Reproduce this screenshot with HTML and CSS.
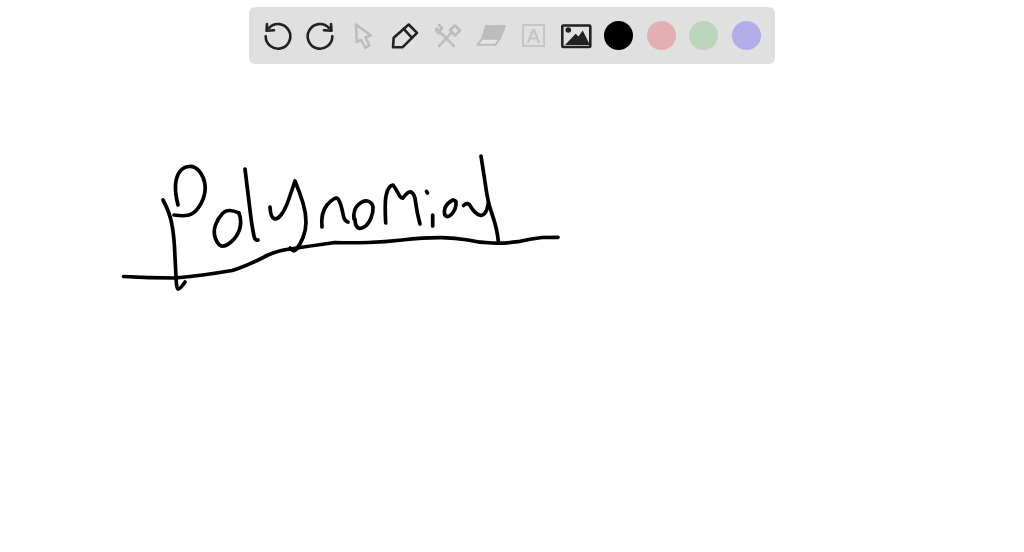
FILE: index.html
```html
<!DOCTYPE html>
<html lang="en">
<head>
<meta charset="utf-8">
<title>Whiteboard</title>
<link rel="stylesheet" href="styles.css">
</head>
<body>
<main class="board">
  <svg class="ink" viewBox="0 0 1024 552" role="img" aria-label="Handwritten word: Polynomial">
    <path d="M163 200Q170 213 172 225Q174.3 237 175 257Q176 277 176.3 282Q176.7 288 178 289Q180 289.5 185 282"/>
    <path d="M178 205Q175 193 175.5 185Q176 177 179.5 172Q183 167 189 166.5Q195 166 199.5 171.5Q204 177 205 185Q206 193 202 201.5Q198 210 192.5 213.5Q187 217 174 215"/>
    <path d="M239 213Q228 208 223 213Q218 218 215.5 225Q213 232 215.5 238.5Q218 245 221.5 246Q225 247 231 242Q237 237 239.5 229.5Q242 222 239 213"/>
    <path d="M245 169Q248 193 250 210Q252 227 254 236Q255 241 258 240"/>
    <path d="M270 207Q270.5 217 274 218.5Q277 220 281 215Q285 210 288.5 200Q292 190 295 181Q300 193 303 203Q306 213 306 222Q306 230 303 237.5Q300 245 296.5 249Q293.3 253 290 248"/>
    <path d="M322 227Q320.5 213 327 205Q335 196 338 199Q341 203 343 214Q344 221 348 222"/>
    <path d="M354 219Q353 210 358 205Q363 200 367.5 201Q372 202 373 207Q373.5 212 371 218Q368 225 364 227Q360 229.5 357.5 227.5Q355 225 355 219"/>
    <path d="M385.7 223Q384.5 200 386.5 194Q388.3 186 393 185Q396 189 398 193Q401 199 403 198Q408 191 411 192Q415 194 415.5 202Q417 213 420 224"/>
    <path d="M432.7 215L432.7 226M426.5 191.5L427.5 193"/>
    <path d="M453 200Q447 203 445 208Q443 215 447 216.5Q451 217 455 209Q458 200 453 200"/>
    <path d="M463.5 205.5Q468 201 471 207Q475 214 481 215.5Q485 215 487 209L488.5 203"/>
    <path d="M481 156L486.7 193Q488 203 492 214Q497 228 498.3 241"/>
    <path d="M123.5 276.5Q148 278 175 278Q200 276 232 270.5Q247 266 268 255Q280 250 290 249Q310 246 335 242.5Q350 243 368 242.5Q385 242 402 240Q425 237.5 442 237.7Q455 238 468 240Q480 243 492 243Q505 243.5 518 241.7Q530 239 542 237.5L558 237.3"/>
  </svg>

  <div class="toolbar">
    <span class="tool"><svg class="icon icon-dark" viewBox="0 0 30 30"><path d="M7 7A12.3 12.3 0 1 1 3.7 15.2"/><path d="M5 3L4.5 9.8L12 9.3"/></svg></span>
    <span class="tool"><svg class="icon icon-dark" viewBox="0 0 30 30"><path d="M24 7A12.3 12.3 0 1 0 27.3 15.2"/><path d="M26 3L26.5 9.8L19 9.3"/></svg></span>
    <span class="tool"><svg class="icon icon-muted" viewBox="0 0 30 30"><path d="M8 3.5L23 14.5L17.3 16.2L21.3 24.5L17.3 26.8L13 18.8L8.7 21.2Z"/></svg></span>
    <span class="tool"><svg class="icon icon-dark" viewBox="0 0 30 30"><path d="M3 26.2L3.7 16.8L18.7 3.5L27 11.8L12.7 26.2Z"/><path d="M13.7 7.8L22 16.8"/></svg></span>
    <span class="tool"><svg class="icon icon-muted" viewBox="0 0 30 30"><path d="M6 4L9 7L7 10L3.5 7.5C2.5 11 5 13 8.5 12.5L21 25.2"/><path d="M6 25.2L19 11"/><path d="M17 9L22 4.5L27 9.5L22 14.5Z"/></svg></span>
    <span class="tool"><svg class="icon eraser" viewBox="0 0 30 30"><path class="eraser-top" d="M10 5L29 5L23.6 17.8L6 17.8Z"/><path class="eraser-tip" d="M6 17.8L23.6 17.8L19.3 23.8L1.5 23.8Z"/></svg></span>
    <span class="tool"><span class="text-tool">A</span></span>
    <span class="tool"><svg class="icon-wide" viewBox="0 0 32 30"><rect class="frame" x="2.3" y="4.5" width="28" height="21.5" rx="1"/><circle class="photo" cx="8.3" cy="9" r="2.8"/><path class="photo" d="M5 24L15.7 12.8L18.5 15.5L22.7 9.5L30 24Z"/></svg></span>
    <span class="tool"><span class="swatch swatch-black"></span></span>
    <span class="tool"><span class="swatch swatch-pink"></span></span>
    <span class="tool"><span class="swatch swatch-green"></span></span>
    <span class="tool"><span class="swatch swatch-purple"></span></span>
  </div>
</main>
</body>
</html>
```

FILE: styles.css
```css
html, body {
  margin: 0;
  height: 100%;
  background: #fff;
}

.board {
  position: relative;
  height: 552px;
  overflow: hidden;
  display: flex;
  justify-content: center;
  align-items: flex-start;
  padding-top: 7px;
  box-sizing: border-box;
}

.ink {
  position: absolute;
  inset: 0;
  width: 1024px;
  height: 552px;
  fill: none;
  stroke: #000;
  stroke-width: 3.7;
  stroke-linecap: round;
  stroke-linejoin: round;
}

.toolbar {
  position: relative;
  width: 526px;
  height: 57px;
  box-sizing: border-box;
  padding: 0 7px;
  display: grid;
  grid-template-columns: repeat(12, 1fr);
  align-items: center;
  justify-items: center;
  background: #e0e0e0;
  border-radius: 6px;
}

.tool {
  display: flex;
  align-items: center;
  justify-content: center;
  width: 100%;
  height: 100%;
}

.icon {
  width: 30px;
  height: 30px;
  fill: none;
  stroke-linecap: round;
  stroke-linejoin: round;
}

.icon-dark {
  stroke: #222;
  stroke-width: 2.6;
}

.icon-muted {
  stroke: #bcbcbc;
  stroke-width: 2.5;
}

.eraser-top {
  fill: #bcbcbc;
  stroke: #bcbcbc;
  stroke-width: 2;
}

.eraser-tip {
  fill: #e6e6e6;
  stroke: #bcbcbc;
  stroke-width: 2;
}

.text-tool {
  width: 23px;
  height: 23px;
  box-sizing: border-box;
  display: flex;
  align-items: center;
  justify-content: center;
  border: 2px solid #c6c6c6;
  color: #c2c2c2;
  font: 20px/1 "Liberation Sans", Arial, sans-serif;
}

.icon-wide {
  width: 32px;
  height: 30px;
}

.frame {
  fill: none;
  stroke: #222;
  stroke-width: 2.6;
}

.photo {
  fill: #222;
}

.swatch {
  width: 29px;
  height: 29px;
  border-radius: 50%;
}

.swatch-black {
  background: #000;
}

.swatch-pink {
  background: #e4afb3;
}

.swatch-green {
  background: #bcd4bc;
}

.swatch-purple {
  background: #b2ace8;
}
```
